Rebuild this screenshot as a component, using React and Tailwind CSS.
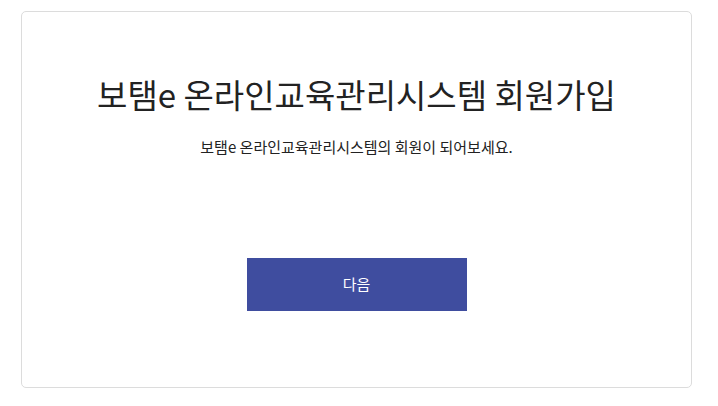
export default function App() {
  return (
    <div className="w-[718px] h-[406px] bg-white pt-[11px] pl-[21px]" style={{ fontFamily: '"Noto Sans CJK KR", "Noto Sans", sans-serif' }}>
      <div className="w-[671px] h-[377px] border border-[#dcdcdc] rounded-[5px] flex flex-col items-center">
        <h1 className="mt-[58px] text-[33px] leading-[48px] text-[#222] font-normal">보탬e 온라인교육관리시스템 회원가입</h1>
        <p className="mt-[19px] text-[15px] leading-[20px] text-[#222]">보탬e 온라인교육관리시스템의 회원이 되어보세요.</p>
        <button className="mt-[101px] w-[220px] h-[53px] bg-[#3f4d9f] text-white text-[15px]">다음</button>
      </div>
    </div>
  );
}
